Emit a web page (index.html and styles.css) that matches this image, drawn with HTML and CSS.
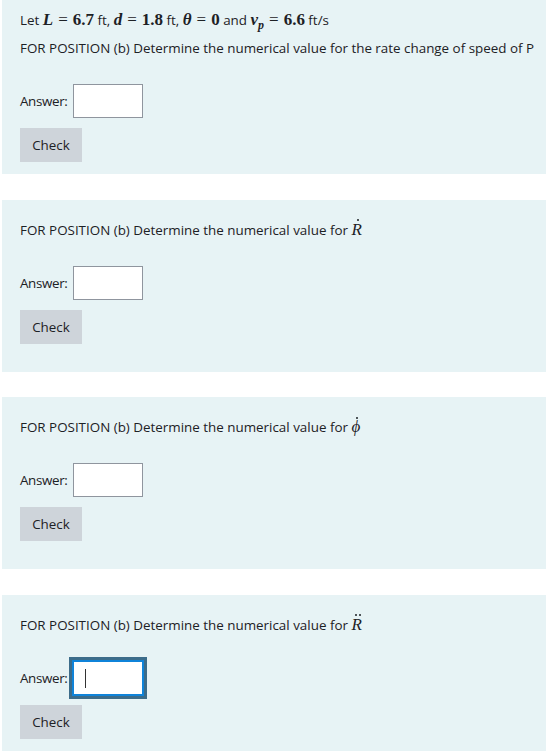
FILE: index.html
```html
<!DOCTYPE html>
<html>
<head>
<meta charset="utf-8">
<link rel="stylesheet" href="styles.css">
</head>
<body>
<div class="page">
  <div class="que first">
    <p class="qtext">Let <span class="m"><i>L</i><span class="op">=</span>6.7</span> ft, <span class="m"><i>d</i><span class="op">=</span>1.8</span> ft, <span class="m"><i>θ</i><span class="op">=</span>0</span> and <span class="m"><i>v</i><sub><i>p</i></sub><span class="op">=</span>6.6</span> ft/s</p>
    <p class="qtext">FOR POSITION (b) Determine the numerical value for the rate change of speed of P</p>
    <div class="answer"><label>Answer:</label><input type="text" class="inp"></div>
    <button class="check">Check</button>
  </div>

  <div class="que">
    <p class="qtext">FOR POSITION (b) Determine the numerical value for <span class="m"><i class="acc">R<span class="dot1"></span></i></span></p>
    <div class="answer"><label>Answer:</label><input type="text" class="inp"></div>
    <button class="check">Check</button>
  </div>

  <div class="que">
    <p class="qtext">FOR POSITION (b) Determine the numerical value for <span class="m"><i class="acc">ϕ<span class="dot1 phi"></span></i></span></p>
    <div class="answer"><label>Answer:</label><input type="text" class="inp"></div>
    <button class="check">Check</button>
  </div>

  <div class="que">
    <p class="qtext">FOR POSITION (b) Determine the numerical value for <span class="m"><i class="acc">R<span class="dot2"></span></i></span></p>
    <div class="answer"><label>Answer:</label><span class="focuswrap"><input type="text" class="inp focused"><span class="caret"></span></span></div>
    <button class="check">Check</button>
  </div>
</div>
</body>
</html>
```
FILE: styles.css
```css
html, body {
  margin: 0;
  padding: 0;
  background: #fff;
}
body {
  font-family: "Open Sans", "Noto Sans", sans-serif;
  font-size: 13.4px;
  color: #1d2125;
}
.page {
  padding-left: 2px;
}
.que {
  background: #e7f3f5;
  padding: 19px 18px 28px 18px;
  margin-bottom: 25.5px;
  height: 125px;
}
.que.first {
  padding-top: 9px;
  padding-bottom: 12px;
  height: 153px;
}
.qtext {
  margin: 0;
  line-height: 22px;
  white-space: nowrap;
}
.qtext + .qtext {
  margin-top: 6px;
}
.m {
  font-family: "Liberation Serif", "DejaVu Serif", serif;
  font-size: 17px;
  font-weight: bold;
}
.m i {
  font-style: italic;
}
.m .op {
  font-weight: normal;
  padding: 0 5px;
}
.m sub {
  font-size: 12px;
  vertical-align: -4px;
  line-height: 0;
}
.m .acc {
  position: relative;
  display: inline-block;
  line-height: 16px;
  font-weight: normal;
}
.dot1, .dot2 {
  position: absolute;
  top: -3px;
  left: 6px;
  width: 2px;
  height: 2px;
  background: #1d2125;
  border-radius: 50%;
}
.dot1.phi {
  left: 5px;
  top: -2px;
}
.dot2 {
  left: 4px;
  box-shadow: 4px 0 0 #1d2125;
}
.answer {
  display: flex;
  align-items: center;
  margin-top: 25px;
  height: 34px;
}
.answer label {
  margin-right: 5px;
  letter-spacing: -0.35px;
}
.inp {
  box-sizing: border-box;
  width: 70px;
  height: 34px;
  border: 1px solid #8f959e;
  background: #fff;
  margin: 0;
  padding: 0;
  outline: none;
}
.focuswrap {
  position: relative;
  display: inline-block;
  height: 34px;
}
.inp.focused {
  border: 1px solid #0f83d9;
  box-shadow: 0 0 0 1px #0f83d9, 0 0 0 4px #3c6c8a;
}
.caret {
  position: absolute;
  left: 12px;
  top: 8px;
  width: 1px;
  height: 19px;
  background: #333;
}
.check {
  display: block;
  margin-top: 10px;
  width: 62px;
  height: 34px;
  border: none;
  background: #ced4da;
  color: #1d2125;
  font-family: "Open Sans", "Noto Sans", sans-serif;
  font-size: 13.4px;
  padding: 0;
}
```
